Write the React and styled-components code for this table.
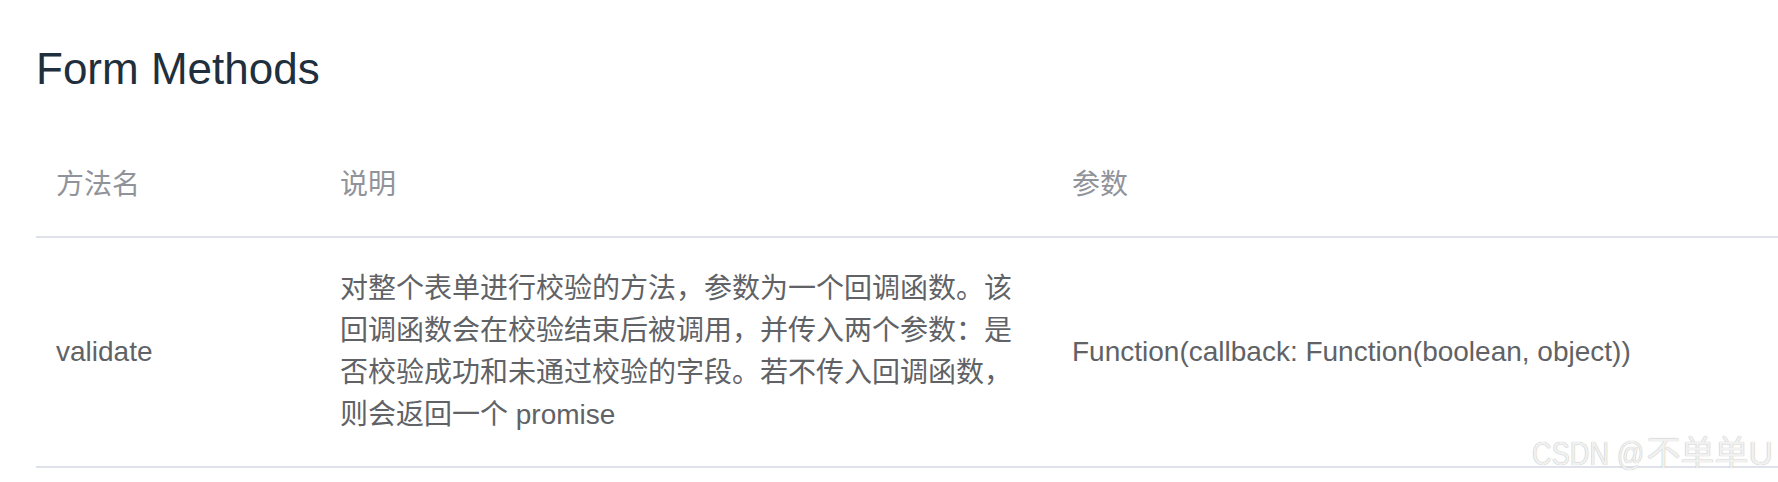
import styled, { createGlobalStyle } from "styled-components";

const GlobalStyle = createGlobalStyle`
  html, body {
    margin: 0;
    padding: 0;
    background: #fff;
  }
  body {
    font-family: "Liberation Sans", "Noto Sans CJK SC", sans-serif;
  }
`;

const Page = styled.div`
  position: relative;
  height: 482px;
  overflow: hidden;
  padding: 36px 0 0 36px;
  box-sizing: border-box;
`;

const Title = styled.h3`
  margin: 0;
  font-size: 44px;
  line-height: 66px;
  font-weight: 400;
  color: #1f2f3d;
`;

const Table = styled.table`
  margin-top: 32px;
  width: 100%;
  border-collapse: collapse;
  table-layout: fixed;
  font-size: 28px;
  line-height: 42px;
`;

const HeadCell = styled.th`
  box-sizing: border-box;
  width: ${(p) => (p.$w ? `${p.$w}px` : "auto")};
  padding: 30px 20px;
  text-align: left;
  font-weight: 400;
  color: #909399;
  border-bottom: 2px solid #dfe2e8;
`;

const Cell = styled.td`
  box-sizing: border-box;
  padding: 30px 20px;
  vertical-align: middle;
  color: #606266;
  border-bottom: 2px solid #dfe2e8;
`;

const Watermark = styled.div`
  position: absolute;
  right: 5px;
  bottom: 12px;
  font-size: 34px;
  line-height: 34px;
  white-space: nowrap;
  color: #f1f1f1;
  text-shadow: 0 0 1px #a0a0a0;
`;

// latin part of the watermark is drawn condensed
const Narrow = styled.span`
  display: inline-block;
  transform: scaleX(0.8);
  transform-origin: left center;
  margin-right: -26px;
`;

const methods = [
  {
    name: "validate",
    desc: "对整个表单进行校验的方法，参数为一个回调函数。该回调函数会在校验结束后被调用，并传入两个参数：是否校验成功和未通过校验的字段。若不传入回调函数，则会返回一个 promise",
    params: "Function(callback: Function(boolean, object))",
  },
];

export default function App() {
  return (
    <>
      <GlobalStyle />
      <Page>
        <Title>Form Methods</Title>
        <Table>
          <thead>
            <tr>
              <HeadCell $w={284}>方法名</HeadCell>
              <HeadCell $w={732}>说明</HeadCell>
              <HeadCell>参数</HeadCell>
            </tr>
          </thead>
          <tbody>
            {methods.map((m) => (
              <tr key={m.name}>
                <Cell>{m.name}</Cell>
                <Cell>{m.desc}</Cell>
                <Cell>{m.params}</Cell>
              </tr>
            ))}
          </tbody>
        </Table>
        <Watermark>
          <Narrow>CSDN @</Narrow>不单单U
        </Watermark>
      </Page>
    </>
  );
}
